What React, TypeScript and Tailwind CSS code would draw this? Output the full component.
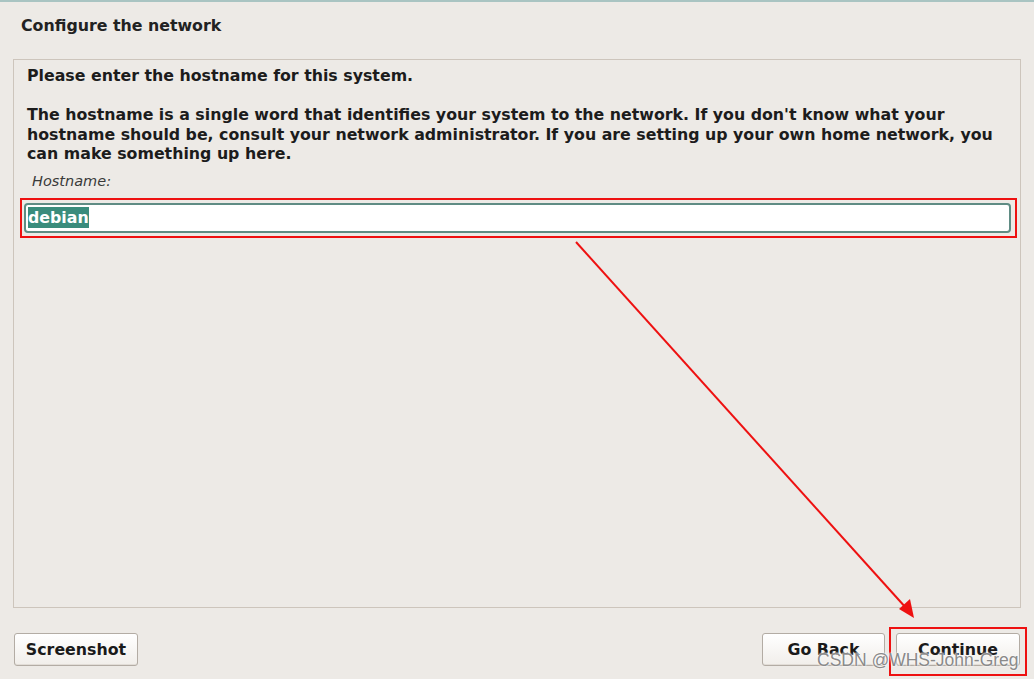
import React from 'react';

const font = { fontFamily: '"DejaVu Sans", Verdana, sans-serif' };

const Button = ({ label, w }: { label: string; w: string }) => (
  <button
    className={`h-[33px] ${w} rounded-[3px] border border-[#b3aca4] bg-gradient-to-b from-white to-[#f1eeea] text-[15.8px] font-bold text-[#1a1a1a] shadow-[inset_0_-1px_0_#e2ddd7]`}
  >
    {label}
  </button>
);

const App = () => {
  return (
    <div className="relative flex h-[679px] w-[1034px] flex-col overflow-hidden bg-[#edeae6]" style={font}>
      <div className="h-[2px] bg-[#a9c4c2]" />

      <div className="flex h-[57px] items-start pl-[21px] pt-[12px] text-[15.8px] font-bold text-[#222]">
        Configure the network
      </div>

      {/* main panel */}
      <div className="mx-[13px] h-[549px] border border-[#cdc5bc] bg-[#edeae6] pl-[13px] pr-[6px] pt-[6px] text-[15.8px] font-bold leading-[19.5px] text-[#1c1c1c]">
        <p>Please enter the hostname for this system.</p>
        <p className="mt-[19.5px]">
          The hostname is a single word that identifies your system to the network. If you don't know what your
          hostname should be, consult your network administrator. If you are setting up your own home network, you
          can make something up here.
        </p>
        <div className="mt-[7px] pl-[5px] text-[14.5px] font-normal italic leading-[20px] text-[#3a3a3a]">Hostname:</div>

        <div className="-ml-[7px] -mr-[3px] mt-[7px] border-2 border-[#ee1111] pb-[3px] pl-[2px] pr-[4px] pt-[3px]">
          <div className="flex h-[30px] items-center rounded-[4px] border-2 border-[#5f8c84] bg-white pl-[2px]">
            <span className="bg-[#3a8c7c] text-[15.8px] leading-[21px] text-white">debian</span>
          </div>
        </div>
      </div>

      {/* bottom buttons */}
      <div className="flex items-center justify-between pl-[14px] pr-[14px] pt-[25px]">
        <Button label="Screenshot" w="w-[124px]" />
        <div className="flex items-center gap-[11px]">
          <Button label="Go Back" w="w-[123px]" />
          <div className="relative">
            <Button label="Continue" w="w-[124px]" />
            <div className="pointer-events-none absolute -bottom-[10px] -left-[7px] -right-[7px] -top-[6px] border-2 border-[#ee1111]" />
          </div>
        </div>
      </div>

      {/* annotation arrow */}
      <svg className="pointer-events-none absolute left-0 top-0" width="1034" height="679">
        <line x1="576" y1="242" x2="907" y2="609" stroke="#ee1111" strokeWidth="2" />
        <polygon points="914,618 899,609 910,599" fill="#ee1111" />
      </svg>

      {/* watermark */}
      <div
        className="pointer-events-none absolute left-[817px] top-[647px] text-[17.5px] text-[#8a8a8a] [text-shadow:0_0_2px_#fff,0_0_2px_#fff]"
        style={{ fontFamily: '"Liberation Sans", Arial, sans-serif' }}
      >
        CSDN @WHS-John-Greg
      </div>
    </div>
  );
};

export default App;
